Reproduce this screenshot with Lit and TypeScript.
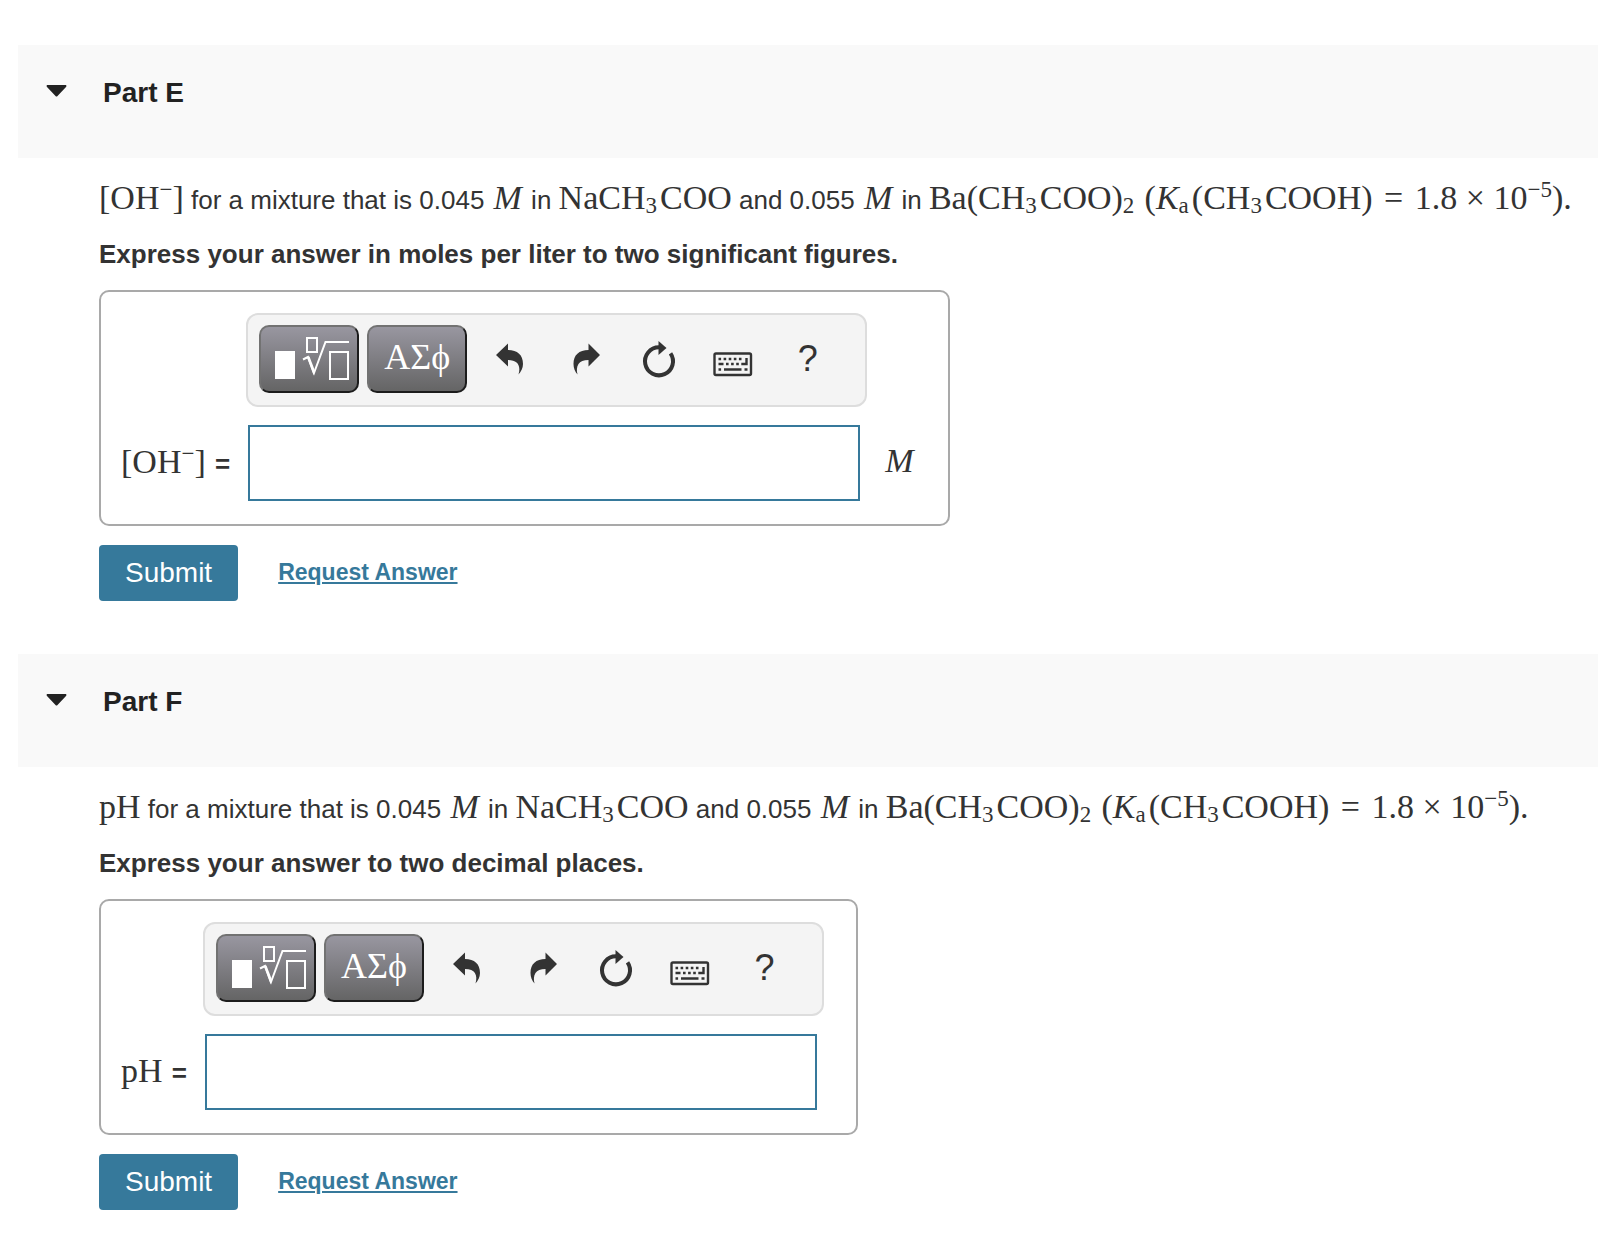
import { LitElement, html, css, svg, nothing, type TemplateResult } from "lit";
import { customElement, property, state } from "lit/decorators.js";

const hydroxide = html`<span class="math">[OH<sup>−</sup>]</span>`;
const acidity = html`<span class="math">pH</span>`;
const molar = html`<span class="math molar">M</span>`;

const mathStyles = css`
  .math {
    font-family: "Liberation Serif", "Times New Roman", serif;
    font-size: 34px;
    font-weight: 400;
    line-height: 40px;
    white-space: nowrap;
  }
  .molar {
    font-style: italic;
    margin: 0 2px;
  }
  .relation {
    margin: 0 3px;
  }
  sub,
  sup {
    font-size: 23px;
    line-height: 0;
  }
  sub {
    vertical-align: -4px;
    margin-right: 3px;
  }
  sup {
    vertical-align: 12px;
  }
`;

const templatesIcon = svg`
  <rect x="16" y="26" width="20" height="28" fill="#fff"/>
  <g fill="none" stroke="#fff" stroke-width="2">
    <rect x="48" y="13" width="10" height="14"/>
    <rect x="71" y="27" width="18" height="27"/>
    <path d="M44 34.5L49 32L55 48L66.5 17H90"/>
  </g>
  <path d="M48 32.5L50.5 31.5L56 46L54.5 50Z" fill="#fff"/>`;

const undoIcon = svg`<path d="M24 30L36 18.5V25C45.500 25 51 30 51 39C51 43 49 47 46.5 49.5C49 41 46 35 36 35V41.500Z"/>`;
const redoIcon = svg`<path d="M53 30L41.500 18.5V25C32 25 26.500 30 26.500 39C26.500 43 28 47 30.500 49.500C28.500 41 31.500 35 41.500 35V41.500Z"/>`;
const resetIcon = svg`
  <path d="M37 22.300A14 14 0 1 0 48.500 28.300" fill="none" stroke="currentColor" stroke-width="4"/>
  <path d="M36.500 16L44.500 23L36.500 30Z"/>`;
const keyboardIcon = svg`
  <rect x="17.500" y="28.500" width="36.500" height="21.500" rx="1.500" fill="none" stroke="currentColor" stroke-width="2.400"/>
  <g fill="none" stroke="currentColor" stroke-width="2.400">
    <path d="M21.500 34H46.500" stroke-dasharray="2.600 2.500"/>
    <path d="M21.500 39H45" stroke-dasharray="5 2.500 2.600 2.500 2.600 2.500 2.600 2.500"/>
    <path d="M49.500 33V39H45M21.500 44.500H24.100M27 44.500H44.500M47.500 44.500H50.500"/>
  </g>`;

@customElement("equation-toolbar")
class EquationToolbar extends LitElement {
  static styles = css`
    :host {
      display: block;
    }
    .bar {
      box-sizing: border-box;
      display: flex;
      gap: 8px;
      padding: 10px 18px 12px 11px;
      border: 2px solid #ddd;
      border-radius: 12px;
      background: #f4f4f4;
    }
    button {
      box-sizing: border-box;
      display: grid;
      place-items: center;
      height: 68px;
      margin: 0;
      padding: 0;
      font: 36px/40px "Liberation Serif", "Times New Roman", serif;
      cursor: pointer;
    }
    .palette {
      width: 100px;
      border: 2px solid;
      border-color: #727272 #1c1c1c #1c1c1c #727272;
      border-radius: 10px;
      background: linear-gradient(#9a98a2, #636363) border-box;
      color: #fff;
    }
    .palette svg {
      margin: -2px;
    }
    .greek {
      padding-bottom: 4px;
    }
    .tools {
      display: flex;
      margin-left: -3px;
    }
    .tool {
      width: 75px;
      border: 0;
      background: none;
      color: #333;
      fill: #333;
    }
    .help {
      padding-right: 4px;
      font: 36px/40px "Liberation Sans", Arial, sans-serif;
    }
    svg {
      display: block;
    }
  `;

  private tool(name: string, icon: TemplateResult<2>) {
    return html`<button class="tool" type="button" aria-label=${name}>
      <svg width="75" height="68" viewBox="0 0 75 68" aria-hidden="true">${icon}</svg>
    </button>`;
  }

  render() {
    return html`<div class="bar" role="toolbar" aria-label="Equation tools">
      <button class="palette" type="button" aria-label="Templates">
        <svg width="100" height="68" viewBox="0 0 100 68" aria-hidden="true">${templatesIcon}</svg>
      </button>
      <button class="palette" type="button" aria-label="Symbols"><span class="greek">ΑΣϕ</span></button>
      <div class="tools">
        ${this.tool("Undo", undoIcon)} ${this.tool("Redo", redoIcon)}
        ${this.tool("Reset", resetIcon)} ${this.tool("Keyboard shortcuts", keyboardIcon)}
        <button class="tool help" type="button" aria-label="Help">?</button>
      </div>
    </div>`;
  }
}

@customElement("question-part")
class QuestionPart extends LitElement {
  @property() heading = "";
  @property() instruction = "";
  @property({ attribute: false }) quantity: TemplateResult = acidity;
  @property({ attribute: false }) unit?: TemplateResult;
  @state() private open = true;

  static styles = [
    mathStyles,
    css`
      :host {
        display: block;
        color: #333;
      }
      .header {
        margin: 0 0 0 18px;
        padding: 28px 28px 45px;
        background: #f9f9f9;
        font-size: 28px;
        line-height: 40px;
      }
      .toggle {
        display: flex;
        align-items: center;
        gap: 36px;
        padding: 0;
        border: 0;
        background: none;
        color: #222;
        font: inherit;
        font-weight: 700;
        cursor: pointer;
      }
      .arrow {
        width: 21px;
        height: 12px;
        margin-bottom: 4px;
        fill: #222;
      }
      .body {
        padding: 20px 0 53px 99px;
      }
      p {
        margin: 0;
        font-size: 26px;
        line-height: 40px;
      }
      .instruction {
        margin: 14px 0 16px;
        font-weight: 700;
      }
      .answer {
        box-sizing: border-box;
        display: grid;
        grid-template-columns: auto 621px auto;
        column-gap: 16px;
        row-gap: 18px;
        align-items: center;
        width: fit-content;
        padding: 21px 32px 23px 20px;
        border: 2px solid #a9a9a9;
        border-radius: 10px;
      }
      .two {
        grid-template-columns: auto 621px;
      }
      .answer > .molar {
        padding-bottom: 4px;
      }
      equation-toolbar {
        grid-column: 2;
      }
      label {
        grid-column: 1;
        font-size: 26px;
        font-weight: 700;
        line-height: 40px;
        white-space: nowrap;
      }
      label .math {
        margin-right: 2px;
      }
      input {
        box-sizing: border-box;
        height: 76px;
        margin: 0 7px 0 2px;
        padding: 0 12px;
        border: 2px solid #36799b;
        border-radius: 0;
        background: #fff;
        color: #333;
        font: 26px/40px "Liberation Sans", Arial, sans-serif;
      }
      .actions {
        display: flex;
        align-items: center;
        gap: 40px;
        margin-top: 19px;
      }
      .submit {
        height: 56px;
        padding: 0 26px;
        border: 0;
        border-radius: 4px;
        background: #36799b;
        color: #fff;
        font: 28px/40px "Liberation Sans", Arial, sans-serif;
        cursor: pointer;
      }
      .request {
        padding-bottom: 2px;
        color: #36799b;
        font-size: 23px;
        line-height: 40px;
        font-weight: 700;
        text-decoration-thickness: 2px;
        text-underline-offset: 2px;
      }
    `,
  ];

  render() {
    return html`<section>
      <h2 class="header">
        <button
          class="toggle"
          type="button"
          aria-expanded=${this.open}
          @click=${() => (this.open = !this.open)}
        >
          <svg class="arrow" viewBox="0 0 21 12" aria-hidden="true"><path d="M1 0H20Q21 1 20 2L11.500 11Q10.500 12 9.500 11L1 2Q0 1 1 0Z" /></svg>
          ${this.heading}
        </button>
      </h2>
      ${this.open ? this.body() : nothing}
    </section>`;
  }

  private body() {
    return html`<div class="body">
      <p>
        ${this.quantity} for a mixture that is 0.045 ${molar} in
        <span class="math">NaCH<sub>3</sub>COO</span> and 0.055 ${molar} in
        <span class="math">Ba(CH<sub>3</sub>COO)<sub>2</sub></span>
        <span class="math">(<i>K</i><sub>a</sub>(CH<sub>3</sub>COOH) <span class="relation">=</span> 1.8 × 10<sup>−5</sup>).</span>
      </p>
      <p class="instruction">${this.instruction}</p>
      <div class="answer ${this.unit ? "" : "two"}">
        <equation-toolbar></equation-toolbar>
        <label for="answer">${this.quantity} =</label>
        <input id="answer" type="text" autocomplete="off" />
        ${this.unit ?? nothing}
      </div>
      <div class="actions">
        <button class="submit" type="button">Submit</button>
        <a class="request" href="#request">Request Answer</a>
      </div>
    </div>`;
  }
}

@customElement("app-root")
class AppRoot extends LitElement {
  static styles = css`
    :host {
      display: block;
      padding-top: 45px;
      background: #fff;
      font-family: "Liberation Sans", Arial, sans-serif;
    }
  `;

  render() {
    return html`<main>
      <question-part
        heading="Part E"
        instruction="Express your answer in moles per liter to two significant figures."
        .quantity=${hydroxide}
        .unit=${molar}
      ></question-part>
      <question-part
        heading="Part F"
        instruction="Express your answer to two decimal places."
        .quantity=${acidity}
      ></question-part>
    </main>`;
  }
}
